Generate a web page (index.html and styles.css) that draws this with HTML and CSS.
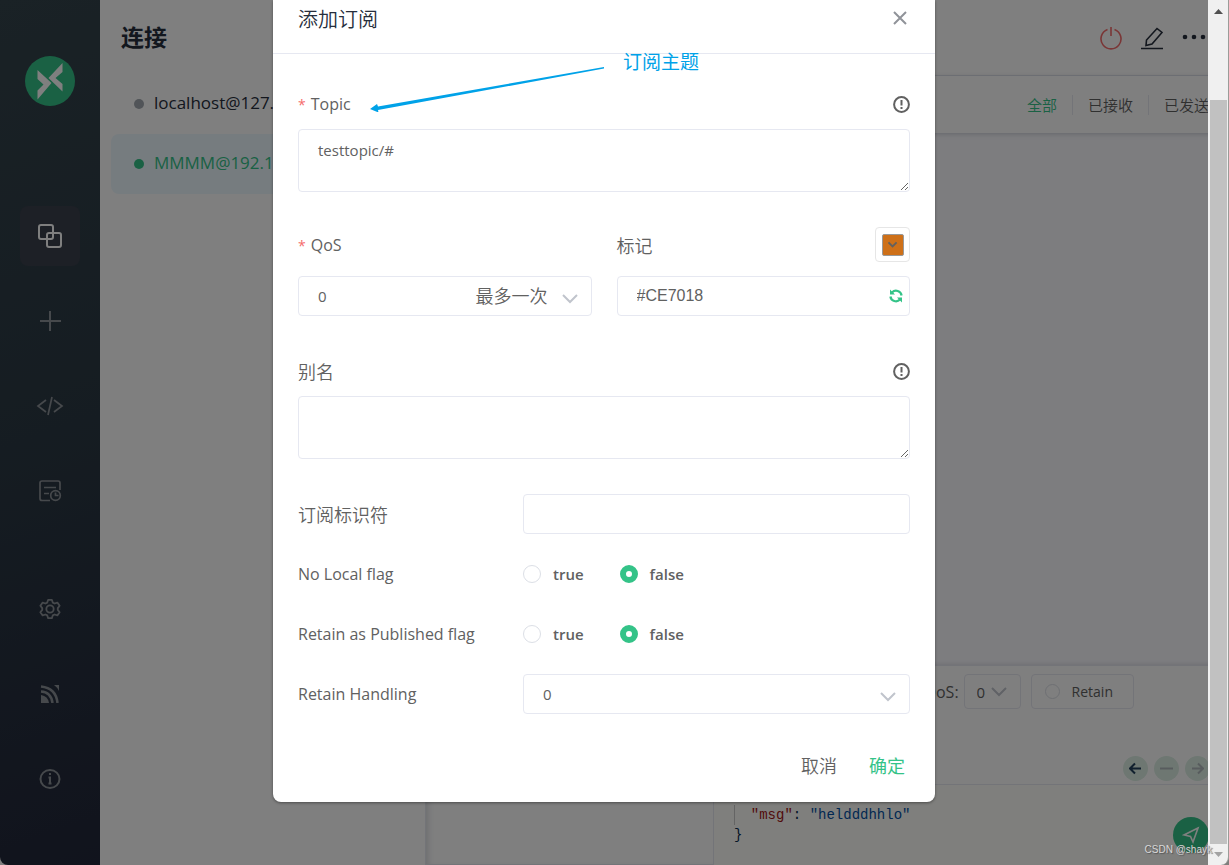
FILE: index.html
```html
<!DOCTYPE html>
<html lang="zh">
<head>
    <meta charset="UTF-8">
    <meta name="viewport" content="width=device-width, initial-scale=1.0">
    <title>MQTTX</title>
    <link rel="stylesheet" href="styles.css">
</head>
<body>
    <div class="app">
        <nav class="leftbar">
            <a href="#" class="logo" aria-label="MQTTX">
                <svg width="50" height="50" viewBox="0 0 50 50">
                    <circle cx="25" cy="25" r="25" fill="#34c388"/>
                    <path d="M12.5 14 L26.500 27 L12.500 43.500 V34.500 L18.500 28.500 L12.500 23 Z" fill="#fff"/>
                    <path d="M37.500 7 V16 L30.500 22 L37.500 28 V35.500 L23.500 22 Z" fill="#fff"/>
                </svg>
            </a>
            <div class="leftbar-top">
                <a href="#" class="leftbar-item active" aria-label="连接">
                    <svg width="24" height="24" viewBox="0 0 24 24" fill="none" stroke="currentColor" stroke-width="2">
                        <rect x="1" y="1" width="14" height="14" rx="2"/>
                        <rect x="9" y="9" width="14" height="14" rx="2"/>
                    </svg>
                </a>
                <a href="#" class="leftbar-item" aria-label="新建">
                    <svg width="22" height="22" viewBox="0 0 22 22" stroke="currentColor" stroke-width="2"><path d="M11 1V21M1 11H22"/></svg>
                </a>
                <a href="#" class="leftbar-item" aria-label="脚本">
                    <svg width="28" height="20" viewBox="0 0 28 20" fill="none" stroke="currentColor" stroke-width="1.7"><path d="M10 4L2 10L10 16M18 4L26 10L18 16M16 1L12 19"/></svg>
                </a>
                <a href="#" class="leftbar-item" aria-label="日志">
                    <svg width="24" height="24" viewBox="0 0 24 24" fill="none" stroke="currentColor" stroke-width="1.7">
                        <path d="M12 21.500H4Q2 21.500 2 19.500V4Q2 2 4 2H20Q22 2 22 4V11M6 8.500H18M6 14.500H11"/>
                        <circle cx="17.500" cy="16.500" r="4.800"/>
                        <path d="M17.500 13.500V16.500H20.500"/>
                    </svg>
                </a>
            </div>
            <div class="leftbar-bottom">
                <a href="#" class="leftbar-item" aria-label="设置">
                    <svg width="22" height="22" viewBox="0 0 24 24" fill="none" stroke="currentColor" stroke-width="2">
                        <path d="M10 2H14L15 5L17 6L20 5L22.500 8.500L20.500 11V13L22.500 15.500L20 19L17 18L15 19L14 22H10L9 19L7 18L4 19L1.500 15.500L3.500 13V11L1.500 8.500L4 5L7 6L9 5Z" stroke-linejoin="round"/>
                        <circle cx="12" cy="12" r="4"/>
                    </svg>
                </a>
                <a href="#" class="leftbar-item" aria-label="订阅源">
                    <svg width="20" height="18" viewBox="0 0 20 18">
                        <path d="M1 10Q8 11 9 18H1Z" fill="currentColor"/>
                        <path d="M1 6.500Q11 7 12.500 18M1 1.500Q16 3 17.500 18" fill="none" stroke="currentColor" stroke-width="2.600"/>
                        <path d="M14 0H19V6Q17 2 14 0Z" fill="currentColor"/>
                    </svg>
                </a>
                <a href="#" class="leftbar-item" aria-label="关于">
                    <svg width="22" height="22" viewBox="0 0 22 22" fill="none" stroke="currentColor" stroke-width="2">
                        <ellipse cx="11" cy="11" rx="9.500" ry="9"/>
                        <path d="M11 5V7M9.500 9.500H11V15M9.500 15.500H12.500"/>
                    </svg>
                </a>
            </div>
        </nav>

        <aside class="connections">
            <h1>连接</h1>
            <a href="#" class="connection">
                <span class="dot"></span>
                <span class="connection-name">localhost@127.0.0.1</span>
            </a>
            <a href="#" class="connection online">
                <span class="dot"></span>
                <span class="connection-name">MMMM@192.168.1.1</span>
            </a>
        </aside>

        <main class="client">
            <header class="topbar">
                <button type="button" class="icon-btn power" aria-label="断开连接">
                    <svg width="22" height="24" viewBox="0 0 22 24" fill="none" stroke="currentColor" stroke-width="1.6"><path d="M7.500 3.500A10 10 0 1 0 14.500 3.500M11 1V10"/></svg>
                </button>
                <button type="button" class="icon-btn" aria-label="编辑">
                    <svg width="22" height="24" viewBox="0 0 22 24" fill="none" stroke="currentColor" stroke-width="1.600"><path d="M0 22.500H22M5 19.500L5.500 14L16 2.500L21 6.500L11 18Z"/></svg>
                </button>
                <button type="button" class="icon-btn" aria-label="更多">
                    <svg width="24" height="24" viewBox="0 0 24 24" fill="currentColor"><circle cx="3" cy="11" r="2.300"/><circle cx="12" cy="11" r="2.300"/><circle cx="21" cy="11" r="2.300"/></svg>
                </button>
            </header>
            <div class="filterbar">
                <a href="#" class="filter active">全部</a>
                <a href="#" class="filter">已接收</a>
                <a href="#" class="filter">已发送</a>
            </div>
            <div class="client-body">
                <section class="subscriptions"></section>
                <section class="chat">
                    <div class="messages"></div>
                    <div class="publish">
                        <div class="publish-options">
                            <label for="publishQos">QoS:</label>
                            <div class="select-box small">
                                <select id="publishQos"><option>0</option></select>
                                <svg class="arrow" width="16" height="10" viewBox="0 0 16 10"><path d="M1 1L8 8L15 1"/></svg>
                            </div>
                            <label class="retain"><input type="radio" name="retain"> Retain</label>
                        </div>
                        <div class="history">
                            <button type="button" class="current" aria-label="上一条">
                                <svg width="13" height="13" viewBox="0 0 13 13"><path d="M12 6.500H1M6 1.500L1 6.500L6 11.500"/></svg>
                            </button>
                            <button type="button" aria-label="最新">
                                <svg width="13" height="13" viewBox="0 0 13 13"><path d="M0 6.500H13"/></svg>
                            </button>
                            <button type="button" aria-label="下一条">
                                <svg width="13" height="13" viewBox="0 0 13 13"><path d="M1 6.500H12M7 1.500L12 6.500L7 11.500"/></svg>
                            </button>
                        </div>
                    </div>
                    <div class="editor">
                        <div class="line">{</div>
                        <div class="line guide">  <span class="key">"msg"</span>: <span class="string">"heldddhhlo"</span></div>
                        <div class="line">}</div>
                        <button type="button" class="send" aria-label="发送">
                            <svg width="18" height="18" viewBox="0 0 18 18" fill="none" stroke="#fff" stroke-width="1.600"><path d="M16 2L2 9L8.500 10.500L11 16Z"/></svg>
                        </button>
                    </div>
                </section>
            </div>
        </main>
    </div>

    <div class="overlay">
        <form class="dialog">
            <header class="dialog-header">
                <h2>添加订阅</h2>
                <button type="button" class="close" aria-label="关闭">
                    <svg width="14" height="14" viewBox="0 0 14 14"><path d="M1 1L13 13M13 1L1 13"/></svg>
                </button>
            </header>

            <div class="dialog-body">
                <div class="field">
                    <div class="field-label">
                        <label for="topic" class="required latin">Topic</label>
                        <svg class="tip" width="17" height="17" viewBox="0 0 17 17"><circle cx="8.500" cy="8.500" r="7.400"/><path d="M8.500 4V9.500M8.500 11V13"/></svg>
                    </div>
                    <textarea id="topic">testtopic/#</textarea>
                </div>

                <div class="columns">
                    <div class="field">
                        <div class="field-label">
                            <label for="qos" class="required latin">QoS</label>
                        </div>
                        <div class="select-box">
                            <select id="qos"><option>0</option></select>
                            <span class="hint">最多一次</span>
                            <svg class="arrow" width="16" height="10" viewBox="0 0 16 10"><path d="M1 1L8 8L15 1"/></svg>
                        </div>
                    </div>
                    <div class="field">
                        <div class="field-label">
                            <label for="color">标记</label>
                            <button type="button" class="color-picker" aria-label="选择颜色">
                                <svg width="22" height="22" viewBox="0 0 22 22"><path d="M6 8L10.500 12.500L15 8"/></svg>
                            </button>
                        </div>
                        <div class="input-box">
                            <input type="text" id="color" class="color-value" value="#CE7018">
                            <button type="button" class="refresh" aria-label="刷新颜色">
                                <svg width="14" height="14" viewBox="0 0 14 14">
                                    <path d="M3 3.500A5.600 5.600 0 0 1 12.600 6.500M11 10.500A5.600 5.600 0 0 1 1.400 7.500" fill="none" stroke="currentColor" stroke-width="2.200"/>
                                    <path d="M1 0.500V5.500H6ZM13 13.500V8.500H8Z" fill="currentColor"/>
                                </svg>
                            </button>
                        </div>
                    </div>
                </div>

                <div class="field">
                    <div class="field-label">
                        <label for="alias">别名</label>
                        <svg class="tip" width="17" height="17" viewBox="0 0 17 17"><circle cx="8.500" cy="8.500" r="7.400"/><path d="M8.500 4V9.500M8.500 11V13"/></svg>
                    </div>
                    <textarea id="alias"></textarea>
                </div>

                <div class="rows">
                    <label for="identifier">订阅标识符</label>
                    <input type="text" id="identifier">

                    <span class="latin" id="noLocal">No Local flag</span>
                    <div class="radios" role="radiogroup" aria-labelledby="noLocal">
                        <label><input type="radio" name="nl"> true</label>
                        <label><input type="radio" name="nl" checked> false</label>
                    </div>

                    <span class="latin" id="retainAs">Retain as Published flag</span>
                    <div class="radios" role="radiogroup" aria-labelledby="retainAs">
                        <label><input type="radio" name="rap"> true</label>
                        <label><input type="radio" name="rap" checked> false</label>
                    </div>

                    <label for="retainHandling" class="latin">Retain Handling</label>
                    <div class="select-box">
                        <select id="retainHandling"><option>0</option></select>
                        <svg class="arrow" width="16" height="10" viewBox="0 0 16 10"><path d="M1 1L8 8L15 1"/></svg>
                    </div>
                </div>
            </div>

            <footer class="dialog-footer">
                <button type="button">取消</button>
                <button type="submit" class="confirm">确定</button>
            </footer>

            <!-- note on the topic field -->
            <svg class="note-arrow" width="236" height="46" viewBox="0 0 236 46"><path d="M234 1L234 2.500L8 44L8.500 46.500L0 43L7 38L8 40.500Z" fill="#00a2e8"/></svg>
            <span class="note">订阅主题</span>
        </form>
    </div>

    <div class="scrollbar">
        <svg class="scroll-btn" width="9" height="5" viewBox="0 0 9 5"><path d="M0 5L4.500 0L9 5Z" fill="#505050"/></svg>
        <div class="thumb"></div>
        <svg class="scroll-btn" width="9" height="5" viewBox="0 0 9 5"><path d="M0 0L4.500 5L9 0Z" fill="#a3a3a3"/></svg>
    </div>
    <span class="watermark">CSDN @shayk</span>
</body>
</html>
```

FILE: styles.css
```css
* {
    box-sizing: border-box;
}
body {
    position: relative;
    margin: 0;
    height: 100vh;
    overflow: hidden;
    font-family: "Open Sans", "Noto Sans CJK SC", sans-serif;
    font-size: 16px;
    color: #616161;
}
h1, h2 {
    margin: 0;
}
a {
    color: inherit;
    text-decoration: none;
}
button {
    padding: 0;
    border: none;
    background: none;
    color: inherit;
    font-family: inherit;
    cursor: pointer;
}
svg {
    display: block;
}
.app {
    display: flex;
    height: 100vh;
    background: #fff;
    isolation: isolate;
}

/* left bar */
.leftbar {
    flex: none;
    display: flex;
    flex-direction: column;
    align-items: center;
    width: 100px;
    padding: 56px 0;
    border-radius: 0 0 0 8px;
    background: linear-gradient(160deg, #34444c, #2b3944 50%, #22273a);
}
.leftbar-top, .leftbar-bottom {
    display: flex;
    flex-direction: column;
    gap: 25px;
}
.leftbar-top {
    margin-top: 100px;
}
.leftbar-bottom {
    margin-top: auto;
}
.leftbar-item {
    display: flex;
    align-items: center;
    justify-content: center;
    width: 60px;
    height: 60px;
    border-radius: 8px;
    color: #8d9298;
}
.leftbar-item.active {
    background: #3a404c;
    color: #fff;
}

/* connection list */
.connections {
    flex: none;
    width: 325px;
    padding: 0 11px;
}
.connections h1 {
    padding-left: 10px;
    font-size: 23px;
    line-height: 74px;
    color: #262e3c;
}
.connection {
    display: flex;
    align-items: center;
    gap: 10px;
    height: 60px;
    padding: 0 23px;
    border-radius: 8px;
    font-size: 17px;
    font-weight: 500;
    color: #262e3c;
}
.connection-name {
    margin-top: -4px;
}
.dot {
    width: 10px;
    height: 10px;
    border-radius: 50%;
    background: #a2a9b0;
}
.online {
    background: #edf8fe;
    color: #34c388;
}
.online .dot {
    background: #34c388;
}

/* client */
.client {
    flex: 1;
    display: flex;
    flex-direction: column;
    min-width: 0;
    border-left: 1px solid #e6e8f1;
}
.topbar {
    display: flex;
    align-items: center;
    justify-content: flex-end;
    gap: 19px;
    height: 76px;
    padding-right: 23px;
    border-bottom: 1px solid #e6e8f1;
}
.icon-btn {
    color: #262e3c;
}
.power {
    color: #f56c6c;
}
.filterbar {
    display: flex;
    align-items: center;
    justify-content: flex-end;
    height: 57px;
    padding-right: 5px;
    font-size: 15px;
    font-weight: 350;
    z-index: 1;
    box-shadow: 0 1px 5px rgba(60, 70, 90, 0.25);
}
.filter {
    padding: 0 15px;
    line-height: 20px;
}
.filter + .filter {
    border-left: 1px solid #e6e8f1;
}
.filter.active {
    color: #34c388;
}
.client-body {
    flex: 1;
    display: flex;
}
.subscriptions {
    width: 288px;
    border: solid #e6e8f1;
    border-width: 0 1px 1px 0;
    box-shadow: inset 6px 0 6px -4px rgba(60, 70, 90, 0.2);
}
.chat {
    flex: 1;
    display: flex;
    flex-direction: column;
}
.messages {
    flex: 1;
    background: #fafaff;
}
.publish {
    height: 120px;
    padding-top: 8px;
    border-top: 1px solid #e6e8f1;
    border-bottom: 1px solid #e6e8f1;
    box-shadow: 0 -1px 4px rgba(60, 70, 90, 0.15);
}
.publish-options {
    display: flex;
    align-items: center;
    justify-content: flex-end;
    gap: 5px;
    padding-right: 95px;
}
.retain {
    display: flex;
    align-items: center;
    gap: 12px;
    height: 35px;
    margin-left: 5px;
    padding: 0 20px 0 13px;
    border: 1px solid #e6e8f1;
    border-radius: 4px;
    font-size: 14px;
}
.history {
    display: flex;
    justify-content: flex-end;
    gap: 6px;
    padding: 47px 19px 0 0;
}
.history button {
    display: flex;
    align-items: center;
    justify-content: center;
    width: 25px;
    height: 25px;
    border-radius: 50%;
    background: #dcefe4;
    color: #b0b8bc;
}
.history .current {
    color: #23405c;
}
.history path {
    fill: none;
    stroke: currentColor;
    stroke-width: 2;
}
.editor {
    position: relative;
    height: 80px;
    padding-left: 20px;
    background: #fffffa;
    font-family: "Liberation Mono", monospace;
    font-size: 14px;
    line-height: 20px;
    color: #0b2b50;
}
.line {
    white-space: pre;
}
.guide {
    box-shadow: inset 1px 0 #c8c8c8;
}
.key {
    color: #a31515;
}
.string {
    color: #0451a5;
}
.send {
    position: absolute;
    right: 20px;
    bottom: 12px;
    display: flex;
    align-items: center;
    justify-content: center;
    width: 36px;
    height: 36px;
    border-radius: 50%;
    background: #34c388;
}

/* dialog */
.overlay {
    position: absolute;
    inset: 0;
    display: flex;
    align-items: flex-start;
    justify-content: center;
    padding-right: 21px;
    background: rgba(0, 0, 0, 0.5);
}
.dialog {
    position: relative;
    width: 90%;
    max-width: 662px;
    border-radius: 0 0 8px 8px;
    background: #fff;
    box-shadow: 0 1px 3px rgba(0, 0, 0, 0.4);
}
.dialog-header {
    display: flex;
    align-items: center;
    justify-content: space-between;
    height: 54px;
    padding: 0 28px 17px 25px;
    border-bottom: 1px solid #e6e8f1;
}
.dialog-header h2 {
    font-size: 20px;
    font-weight: 350;
    color: #262e3c;
}
.close path {
    stroke: #909399;
    stroke-width: 2;
}
.dialog-body {
    display: flex;
    flex-direction: column;
    gap: 35px;
    padding: 30px 25px;
    font-size: 18px;
}
.field-label {
    display: flex;
    align-items: center;
    justify-content: space-between;
    height: 40px;
    margin-bottom: 5px;
}
.columns .field-label {
    height: 35px;
    margin-bottom: 14px;
}
.dialog-body label, .hint {
    font-weight: 350;
}
.dialog-body .latin {
    font-size: 16px;
    font-weight: 400;
}
.required::before {
    content: "*";
    margin-right: 5px;
    font-size: 14px;
    color: #f56c6c;
}
.tip {
    fill: none;
    stroke: #616161;
    stroke-width: 2;
}
textarea, select, input[type="text"] {
    display: block;
    width: 100%;
    height: 40px;
    padding: 0 19px;
    border: 1px solid #e6e8f1;
    border-radius: 4px;
    background: transparent;
    outline: none;
    font-family: inherit;
    font-size: 15px;
    color: #616161;
}
textarea {
    height: 63px;
    padding-top: 10px;
    resize: vertical;
}
select {
    appearance: none;
}
.dialog .color-value {
    font-family: "Liberation Sans", sans-serif;
    font-size: 16px;
}
.columns {
    display: grid;
    grid-template-columns: 1fr 1fr;
    gap: 25px;
}
.select-box, .input-box {
    position: relative;
}
.arrow {
    position: absolute;
    right: 14px;
    top: 18px;
    fill: none;
    stroke: #c0c4cc;
    stroke-width: 2;
    pointer-events: none;
}
.hint {
    position: absolute;
    right: 44px;
    top: 0;
    line-height: 40px;
    pointer-events: none;
}
.small select {
    width: 57px;
    height: 35px;
    padding: 0 12px;
}
.small .arrow {
    top: 13px;
}
.color-picker {
    width: 35px;
    height: 35px;
    padding: 6px;
    border: 1px solid #e6e6e6;
    border-radius: 4px;
}
.color-picker svg {
    border: 1px solid #999;
    border-radius: 2px;
    background: #ce7018;
    fill: none;
    stroke: #616161;
    stroke-width: 2;
}
.refresh {
    position: absolute;
    right: 7px;
    top: 13px;
    color: #34c388;
}
.rows {
    display: grid;
    grid-template-columns: 200px 1fr;
    grid-auto-rows: 40px;
    gap: 20px 25px;
    align-items: center;
}
.radios {
    display: flex;
    gap: 36px;
}
.dialog-body .radios label {
    display: flex;
    align-items: center;
    gap: 12px;
    font-size: 15px;
    font-weight: 600;
}
input[type="radio"] {
    appearance: none;
    width: 18px;
    height: 18px;
    margin: 0;
    border: 1px solid #dcdfe6;
    border-radius: 50%;
}
input[type="radio"]:checked {
    border: 6px solid #34c388;
}
.retain input[type="radio"] {
    width: 15px;
    height: 15px;
}
.dialog-footer {
    display: flex;
    justify-content: flex-end;
    gap: 32px;
    padding: 1px 30px 17px;
}
.dialog-footer button {
    height: 40px;
    font-size: 18px;
    font-weight: 350;
}
.dialog-footer .confirm {
    font-weight: 400;
    color: #34c388;
}
.note-arrow {
    position: absolute;
    left: 97px;
    top: 66px;
}
.note {
    position: absolute;
    left: 350px;
    top: 48px;
    font-size: 19px;
    line-height: 28px;
    color: #00a2e8;
}

/* page scrollbar */
.scrollbar {
    position: absolute;
    top: 0;
    right: 0;
    bottom: 0;
    display: flex;
    flex-direction: column;
    align-items: center;
    width: 21px;
    padding: 9px 0 8px;
    border-right: 1px solid #9a9c98;
    border-radius: 0 0 8px 0;
    background: #f0f0f0;
}
.thumb {
    flex: 1;
    width: 17px;
    margin: 86px 0 8px;
    background: #c1c1c1;
}
.watermark {
    position: absolute;
    right: 17px;
    bottom: 9px;
    font-family: "Liberation Sans", sans-serif;
    font-size: 10px;
    line-height: 12px;
    color: #d8d8d8;
    text-shadow: 1px 1px 1px #555;
}
```
